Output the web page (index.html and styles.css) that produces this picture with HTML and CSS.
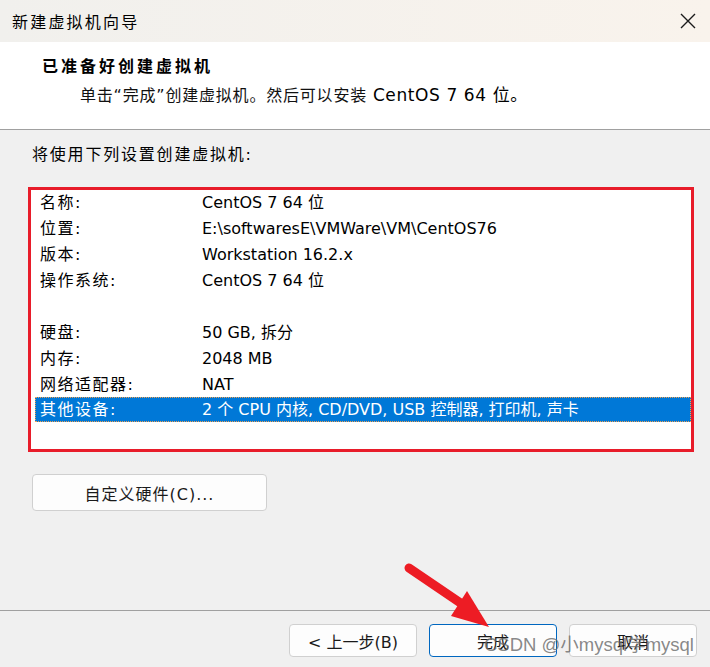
FILE: index.html
```html
<!DOCTYPE html>
<html lang="zh-CN">

<head>
    <meta charset="UTF-8">
    <title>新建虚拟机向导</title>
    <link rel="stylesheet" href="styles.css">
</head>

<body>
    <div class="wizard">
        <div class="titlebar">
            <span class="title">新建虚拟机向导</span>
            <span class="close">
                <svg width="16" height="16" viewBox="0 0 16 16">
                    <path d="M1 1 L15 15 M15 1 L1 15" stroke="#1a1a1a" stroke-width="1.4" fill="none" />
                </svg>
            </span>
        </div>

        <div class="header">
            <div class="heading">已准备好创建虚拟机</div>
            <div class="subtext">单击“完成”创建虚拟机。然后可以安装 <span class="os">CentOS 7 64 位。</span></div>
        </div>

        <div class="content">
            <div class="caption">将使用下列设置创建虚拟机:</div>
            <div class="listbox">
                <div class="row"><span class="label">名称:</span><span>CentOS 7 64 位</span></div>
                <div class="row"><span class="label">位置:</span><span>E:\softwaresE\VMWare\VM\CentOS76</span></div>
                <div class="row"><span class="label">版本:</span><span>Workstation 16.2.x</span></div>
                <div class="row"><span class="label">操作系统:</span><span>CentOS 7 64 位</span></div>
                <div class="row"></div>
                <div class="row"><span class="label">硬盘:</span><span>50 GB, 拆分</span></div>
                <div class="row"><span class="label">内存:</span><span>2048 MB</span></div>
                <div class="row"><span class="label">网络适配器:</span><span>NAT</span></div>
                <div class="row selected"><span class="label">其他设备:</span><span>2 个 CPU 内核, CD/DVD, USB 控制器, 打印机, 声卡</span></div>
            </div>
            <button class="btn custom">自定义硬件(C)...</button>
        </div>

        <div class="footer">
            <button class="btn">&lt; 上一步(B)</button>
            <button class="btn primary">完成</button>
            <button class="btn">取消</button>
        </div>

        <!-- 标注箭头 -->
        <svg class="arrow" width="710" height="667" viewBox="0 0 710 667">
            <line x1="409" y1="568" x2="462" y2="604" stroke="#ed1c24" stroke-width="9" stroke-linecap="round" />
            <polygon points="467,591 489,627 451,616" fill="#ed1c24" />
        </svg>

        <div class="watermark">CSDN @小mysql学mysql</div>
    </div>
</body>

</html>
```

FILE: styles.css
```css
body {
    margin: 0;
    font-family: "DejaVu Sans", "Noto Sans CJK SC", sans-serif;
    color: #000;
}

.wizard {
    position: relative;
    width: 710px;
    height: 667px;
    background-color: #f0f0f0;
    overflow: hidden;
}

.titlebar {
    height: 42px;
    display: flex;
    align-items: center;
    justify-content: space-between;
    padding: 0 12px;
    background: linear-gradient(to right, #f1f0ed, #f9f3ec);
}

.title {
    font-size: 16px;
    letter-spacing: 2.2px;
}

.close {
    display: flex;
    margin-right: 2px;
}

.header {
    height: 88px;
    background-color: #fff;
    border-bottom: 1px solid #a0a0a0;
    box-sizing: border-box;
    padding-top: 14px;
}

.heading {
    margin-left: 42px;
    font-size: 16px;
    font-weight: bold;
    letter-spacing: 3px;
    line-height: 22px;
}

.subtext {
    margin-left: 80px;
    margin-top: 6px;
    font-size: 16px;
    letter-spacing: 0.8px;
    line-height: 22px;
    color: #111;
}

.os {
    font-size: 17px;
    letter-spacing: 0.6px;
    color: #000;
}

.content {
    padding: 14px 16px 0 28px;
    height: 481px;
    box-sizing: border-box;
    border-bottom: 1px solid #a0a0a0;
}

.caption {
    margin-left: 4px;
    font-size: 16px;
    letter-spacing: 1.8px;
    line-height: 22px;
}

.listbox {
    margin-top: 21px;
    height: 265px;
    box-sizing: border-box;
    border: 3px solid #e81c2a;
    background-color: #fff;
    padding: 0 0 0 4px;
}

.row {
    display: flex;
    height: 26px;
    line-height: 26px;
    font-size: 16px;
    padding-left: 5px;
}

.label {
    width: 162px;
    flex-shrink: 0;
    letter-spacing: 1.5px;
}

.row.selected {
    background-color: #0078d7;
    color: #fff;
    outline: 1px dotted #f0a050;
    outline-offset: -1px;
    margin-top: -1px;
    height: 25px;
}

.btn {
    font-family: "DejaVu Sans", "Noto Sans CJK SC", sans-serif;
    font-size: 16px;
    color: #1a1a1a;
    background-color: #fdfdfd;
    border: 1px solid #d0d0d0;
    border-radius: 4px;
    height: 33px;
    width: 128px;
    padding: 0;
}

.custom {
    margin-top: 22px;
    margin-left: 4px;
    width: 235px;
    height: 37px;
    letter-spacing: 1px;
}

.footer {
    display: flex;
    justify-content: flex-end;
    gap: 12px;
    padding: 13px 13px 0 0;
}

.primary {
    border-color: #0067c0;
}

.arrow {
    position: absolute;
    left: 0;
    top: 0;
    pointer-events: none;
}

.watermark {
    position: absolute;
    left: 484px;
    top: 630px;
    font-family: "Liberation Sans", "Noto Sans CJK SC", sans-serif;
    font-size: 18.5px;
    color: rgba(105, 105, 105, 0.8);
    white-space: nowrap;
}
```
